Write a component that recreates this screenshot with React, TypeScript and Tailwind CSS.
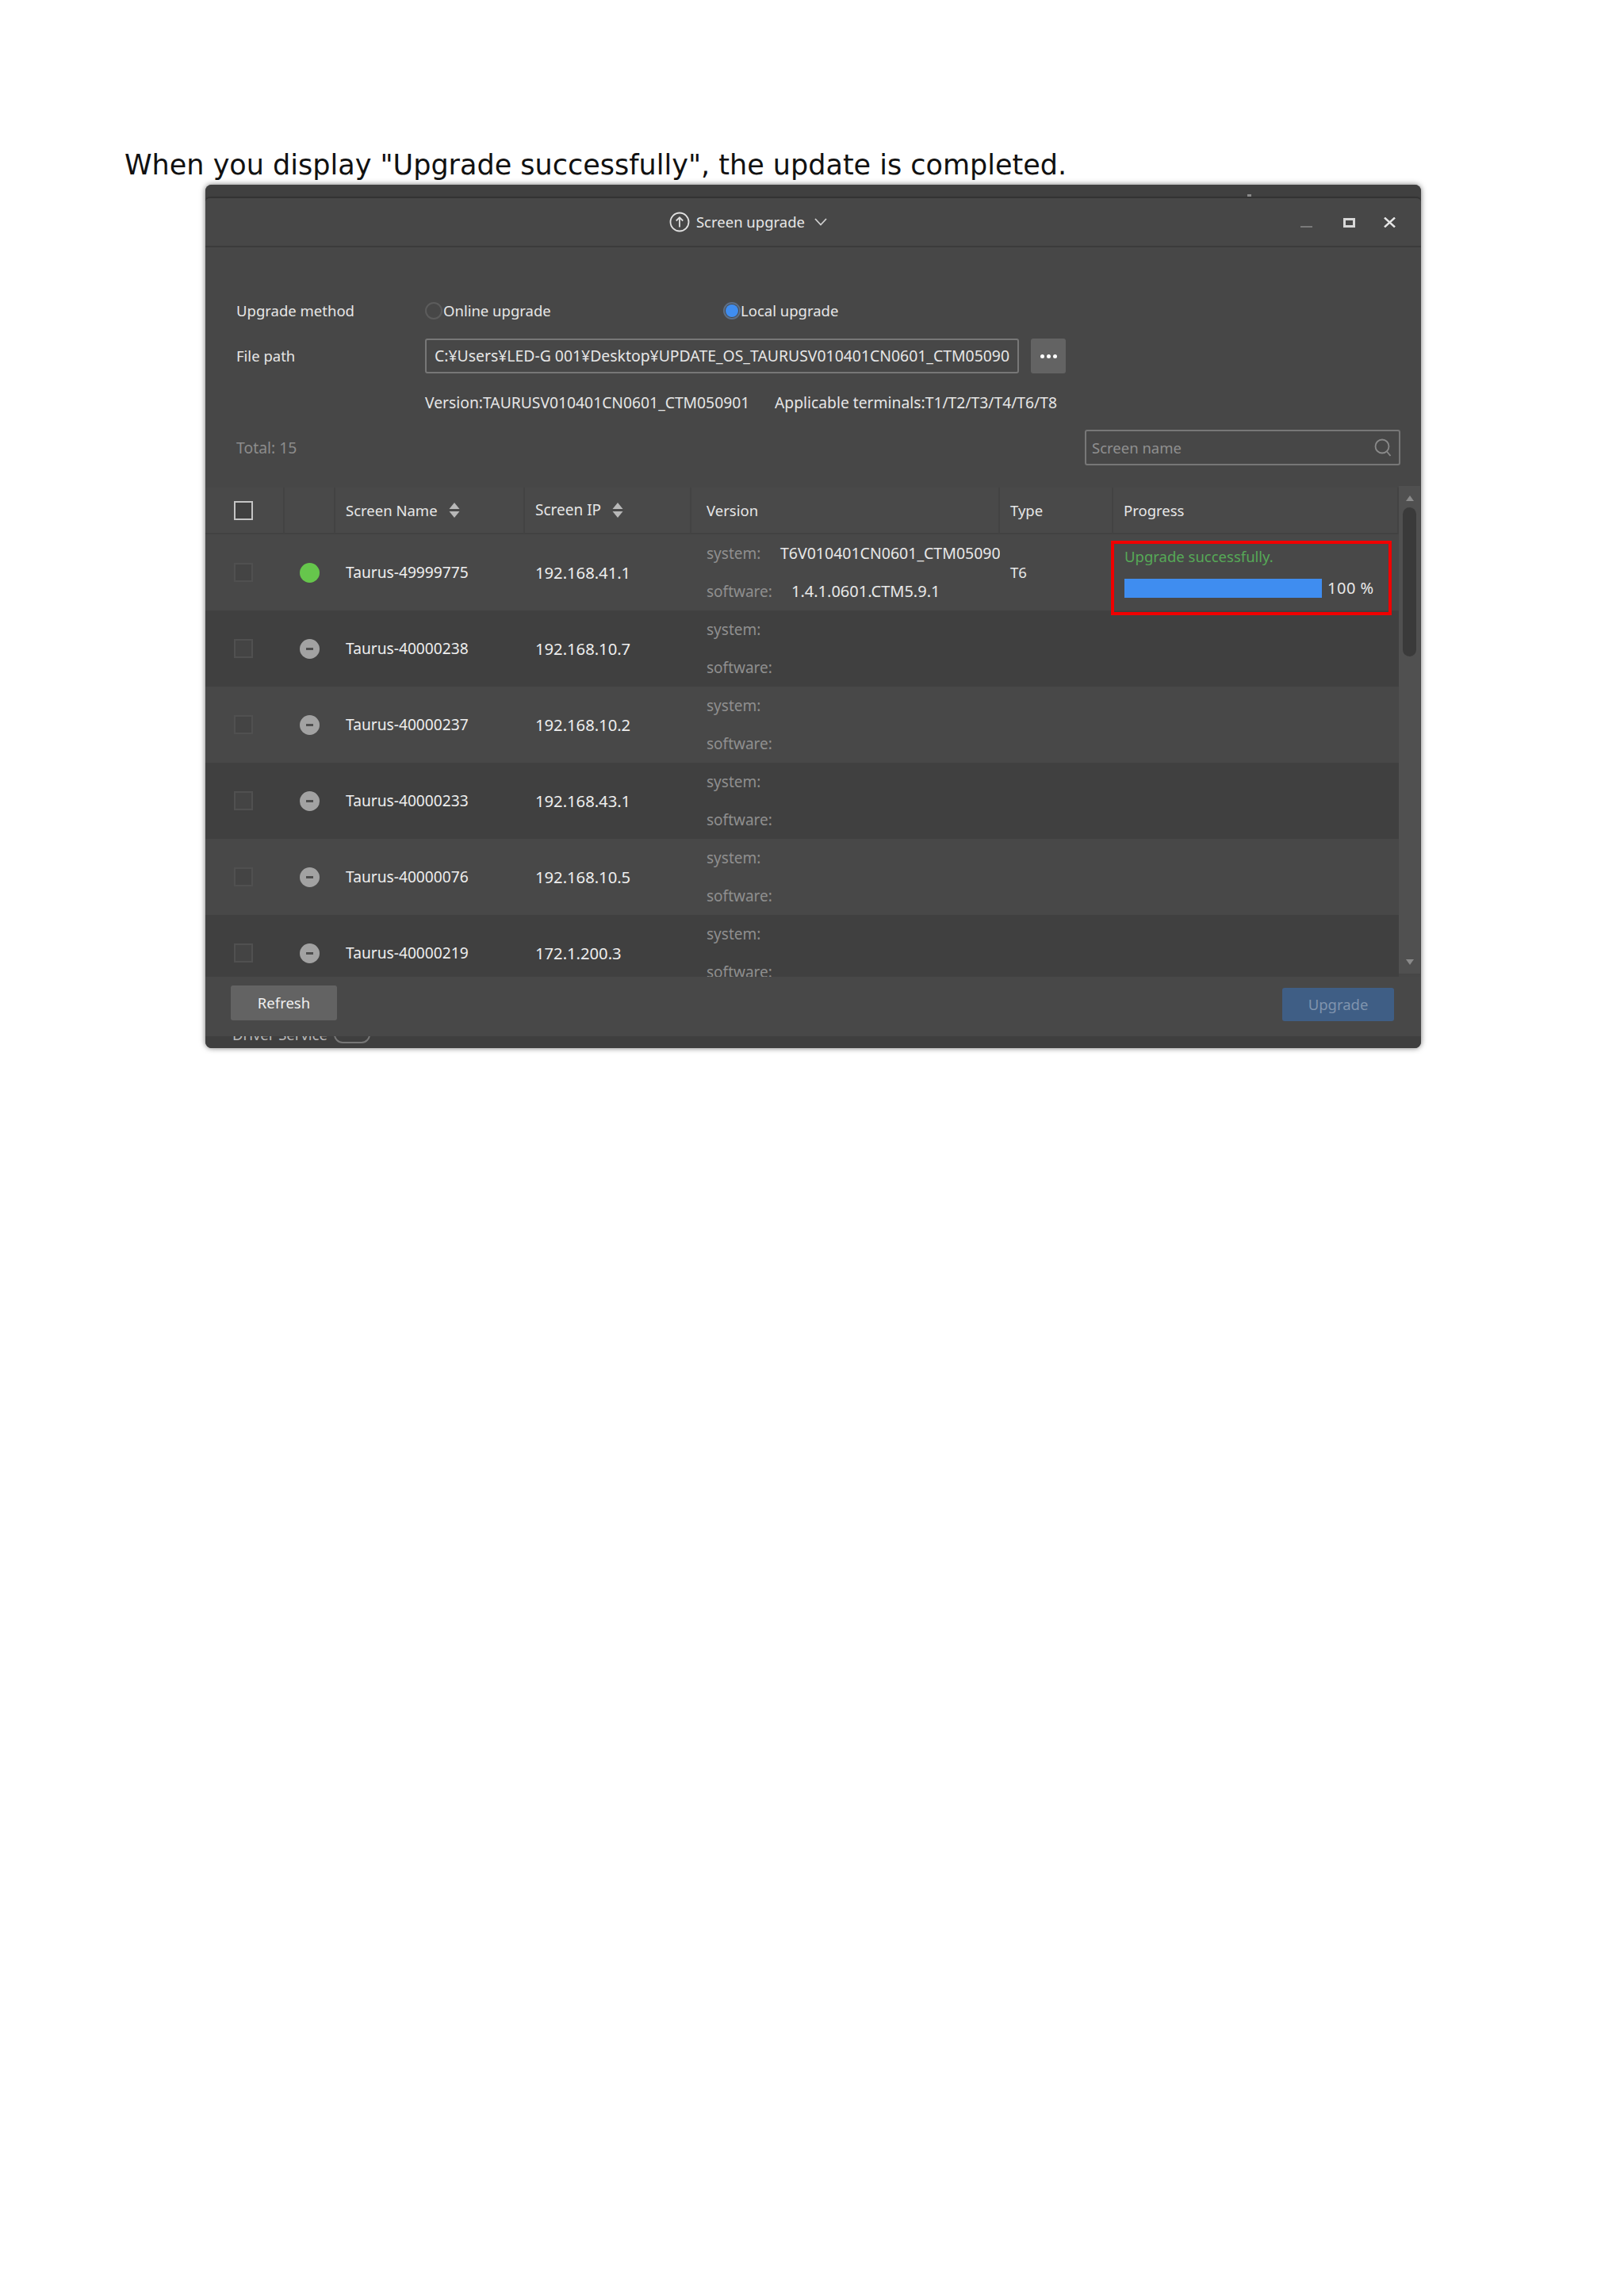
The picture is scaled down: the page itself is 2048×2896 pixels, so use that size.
const rows = [
  { name: "Taurus-49999775", ip: "192.168.41.1", ok: true },
  { name: "Taurus-40000238", ip: "192.168.10.7" },
  { name: "Taurus-40000237", ip: "192.168.10.2" },
  { name: "Taurus-40000233", ip: "192.168.43.1" },
  { name: "Taurus-40000076", ip: "192.168.10.5" },
  { name: "Taurus-40000219", ip: "172.1.200.3" },
];

function Sort() {
  return (
    <svg width="14" height="19" viewBox="0 0 14 19" className="ml-[14px] shrink-0">
      <path d="M7 0 L13.5 8 H0.5 Z M7 19 L13.5 11 H0.5 Z" fill="#b8b8b8" />
    </svg>
  );
}

function HeadCell({ w, pl, children }: { w: string; pl: string; children?: React.ReactNode }) {
  return (
    <div className={`${w} ${pl} flex h-full shrink-0 items-center border-r-2 border-b-2 border-r-[#434343] border-b-[#424242] text-[#e6e6e6]`}>
      {children}
    </div>
  );
}

export default function App() {
  return (
    <div className="min-h-[2896px] bg-white font-['Noto_Sans',sans-serif] text-[18.5px]">
      <div className="pl-[157px] pt-[184px] font-['DejaVu_Sans',sans-serif] text-[35px] leading-[49px] text-[#111]">
        When you display "Upgrade successfully", the update is completed.
      </div>

      <div className="ml-[259px] w-[1533px] overflow-hidden rounded-t-[8px] rounded-b-[8px] bg-[#3f3f3f] shadow-[0_0_7px_rgba(0,0,0,0.55)]">
        <div className="flex h-[15px] justify-end bg-[#404040] pr-[214px]">
          <div className="mt-[12px] h-[3px] w-[5px] bg-[#8a8a8a]" />
        </div>

        <div className="flex h-[1059px] flex-col rounded-t-[6px] border-t-2 border-t-[#333] bg-[#474747] shadow-[0_2px_3px_rgba(0,0,0,0.5)]">
          <div className="relative flex h-[62px] shrink-0 items-center justify-center border-b-2 border-b-[#3b3b3b] text-[#e6e6e6]">
            <div className="mr-[164px] flex items-center">
              <svg width="26" height="26" viewBox="0 0 26 26" fill="none" stroke="#e0e0e0" strokeWidth="1.8">
                <circle cx="13" cy="13" r="11.5" />
                <path d="M13 19.5V7.5M8.8 11.5L13 7.2L17.2 11.5" />
              </svg>
              <span className="ml-[8px]">Screen upgrade</span>
              <svg width="16" height="10" viewBox="0 0 16 10" fill="none" stroke="#d0d0d0" strokeWidth="1.8" className="ml-[12px]">
                <path d="M1 1L8 8.5L15 1" />
              </svg>
            </div>
            <div className="absolute right-[32px] top-[24px] flex items-center gap-[36px]">
              <div className="mr-[3px] mt-[10px] h-[2px] w-[15px] bg-[#7a7a7a]" />
              <div className="h-[12px] w-[15px] border-[3px] border-[#d8d8d8]" />
              <svg width="15" height="13" viewBox="0 0 15 13" fill="none" stroke="#e6e6e6" strokeWidth="2.4">
                <path d="M1 0.5L14 12.5M14 0.5L1 12.5" />
              </svg>
            </div>
          </div>

          <div className="shrink-0 pl-[39px] pr-[26px] text-[#e6e6e6]">
            <div className="mt-[58px] flex h-[44px] items-center">
              <div className="w-[238px]">Upgrade method</div>
              <div className="flex w-[376px] items-center">
                <span className="h-[22px] w-[22px] rounded-full border-2 border-[#5c5c5c]" />
                <span className="ml-[1px]">Online upgrade</span>
              </div>
              <div className="flex items-center">
                <span className="flex h-[22px] w-[22px] items-center justify-center rounded-full border-2 border-[#5c6e86]">
                  <span className="h-[16px] w-[16px] rounded-full bg-[#3f8df0]" />
                </span>
                <span>Local upgrade</span>
              </div>
            </div>
            <div className="mt-[13px] flex h-[44px] items-center">
              <div className="w-[238px]">File path</div>
              <div className="flex h-[44px] w-[749px] items-center overflow-hidden whitespace-nowrap rounded-[3px] border-2 border-[#777] pl-[10px] pr-[10px] text-[19.4px]">
                <span className="overflow-hidden">C:¥Users¥LED-G 001¥Desktop¥UPDATE_OS_TAURUSV010401CN0601_CTM05090</span>
              </div>
              <div className="ml-[15px] flex h-[44px] w-[44px] items-center justify-center gap-[3px] rounded-[3px] bg-[#636363]">
                <span className="h-[5px] w-[5px] rounded-full bg-white" />
                <span className="h-[5px] w-[5px] rounded-full bg-white" />
                <span className="h-[5px] w-[5px] rounded-full bg-white" />
              </div>
            </div>
            <div className="mt-[22px] flex h-[30px] items-center pl-[238px] whitespace-nowrap text-[19.3px]">
              <span className="w-[441px]">Version:TAURUSV010401CN0601_CTM050901</span>
              <span>Applicable terminals:T1/T2/T3/T4/T6/T8</span>
            </div>
            <div className="mt-[19px] flex h-[45px] items-center justify-between">
              <span className="text-[19.4px] text-[#8c8c8c]">Total: 15</span>
              <div className="flex h-[45px] w-[398px] items-center justify-between rounded-[3px] border-2 border-[#777] pl-[7px] pr-[9px] text-[#8f8f8f]">
                <span>Screen name</span>
                <svg width="22" height="24" viewBox="0 0 22 24" fill="none" stroke="#8a8a8a" strokeWidth="1.8">
                  <circle cx="10" cy="10" r="8.5" />
                  <path d="M16 16.5L20.5 22" />
                </svg>
              </div>
            </div>
          </div>

          <div className="relative mt-[28px] flex h-[617px] shrink-0">
            <div className="h-full w-[1505px] shrink-0 overflow-hidden">
              <div className="flex h-[59px] items-center bg-[#494949]">
                <HeadCell w="w-[100px]" pl="pl-[36px]">
                  <span className="h-[24px] w-[24px] border-2 border-[#c4c4c4] bg-[#404040]" />
                </HeadCell>
                <HeadCell w="w-[64px]" pl="pl-[19px]" />
                <HeadCell w="w-[239px]" pl="pl-[13px]">
                  Screen Name
                  <Sort />
                </HeadCell>
                <HeadCell w="w-[210px]" pl="pl-[13px]">
                  <span className="text-[19px]">Screen IP</span>
                  <Sort />
                </HeadCell>
                <HeadCell w="w-[389px]" pl="pl-[19px]">Version</HeadCell>
                <HeadCell w="w-[143px]" pl="pl-[13px]">Type</HeadCell>
                <HeadCell w="w-[360px]" pl="pl-[13px]">Progress</HeadCell>
              </div>
              {rows.map((r, i) => (
                <div key={r.name} className={`flex h-[96px] items-center ${i % 2 ? "bg-[#404040]" : "bg-[#484848]"}`}>
                  <div className="w-[100px] shrink-0 pl-[36px]">
                    <div className="h-[24px] w-[24px] border-2 border-[#505050] bg-[#444]" />
                  </div>
                  <div className="w-[64px] shrink-0 pl-[19px]">
                    {r.ok ? (
                      <div className="h-[25px] w-[25px] rounded-full bg-[#66c64c]" />
                    ) : (
                      <div className="flex h-[25px] w-[25px] items-center justify-center rounded-full bg-[#a2a2a2]">
                        <span className="h-[3px] w-[9px] bg-[#4e4e4e]" />
                      </div>
                    )}
                  </div>
                  <div className="w-[239px] shrink-0 pl-[13px] text-[19.2px] text-[#eeeeee]">{r.name}</div>
                  <div className="w-[210px] shrink-0 pl-[13px] text-[20.2px] text-[#eeeeee]">{r.ip}</div>
                  <div className="w-[389px] shrink-0 overflow-hidden whitespace-nowrap pl-[19px] text-[19px] text-[#8f8f8f]">
                    <div className="flex h-[48px] items-center">
                      <span className="w-[93px] shrink-0">system:</span>
                      {r.ok && <span className="text-[19.5px] text-[#e8e8e8]">T6V010401CN0601_CTM05090</span>}
                    </div>
                    <div className="flex h-[48px] items-center">
                      <span className="w-[107px] shrink-0">software:</span>
                      {r.ok && <span className="text-[20px] text-[#e8e8e8]">1.4.1.0601.CTM5.9.1</span>}
                    </div>
                  </div>
                  <div className="w-[143px] shrink-0 pl-[13px] text-[#e8e8e8]">{r.ok ? "T6" : ""}</div>
                  {r.ok && (
                    <div className="w-[360px] shrink-0 pl-[14px]">
                      <div className="flex h-[30px] items-center text-[#56a957]">Upgrade successfully.</div>
                      <div className="mt-[10px] flex items-center">
                        <div className="h-[24px] w-[249px] bg-[#3f8df0]" />
                        <span className="ml-[7px] text-[20px] tracking-[0.5px] text-[#e8e8e8]">100 %</span>
                      </div>
                    </div>
                  )}
                </div>
              ))}
            </div>

            <div className="-mt-[2px] flex h-[615px] w-[27px] shrink-0 flex-col items-center bg-[#505050]">
              <svg width="10" height="7" viewBox="0 0 10 7" className="mt-[12px]">
                <path d="M5 0L10 7H0Z" fill="#8a8a8a" />
              </svg>
              <div className="mt-[8px] h-[188px] w-[17px] rounded-full bg-[#3a3a3a]" />
              <svg width="10" height="7" viewBox="0 0 10 7" className="mt-[382px]">
                <path d="M5 7L10 0H0Z" fill="#8a8a8a" />
              </svg>
            </div>

            <div className="absolute left-[1142px] top-[67px] h-[94px] w-[354px] border-[4px] border-[#f00000]" />
          </div>

          <div className="flex min-h-0 flex-1 items-start justify-between bg-[#484848] pl-[32px] pr-[34px]">
            <div className="mt-[11px] flex h-[44px] w-[134px] items-center justify-center rounded-[3px] bg-[#636363] text-[#f0f0f0]">
              Refresh
            </div>
            <div className="mt-[14px] flex h-[42px] w-[141px] items-center justify-center rounded-[3px] bg-[#3f5e85] text-[#7f94ae]">
              Upgrade
            </div>
          </div>
        </div>

        <div className="flex h-[15px] items-end overflow-hidden bg-[#3f3f3f] pb-[6px] pl-[34px] text-[#b9b9b9]">
          <span className="leading-[22px]">Driver Service</span>
          <span className="ml-[8px] h-[22px] w-[46px] shrink-0 rounded-full border-2 border-[#777]" />
        </div>
      </div>
    </div>
  );
}
